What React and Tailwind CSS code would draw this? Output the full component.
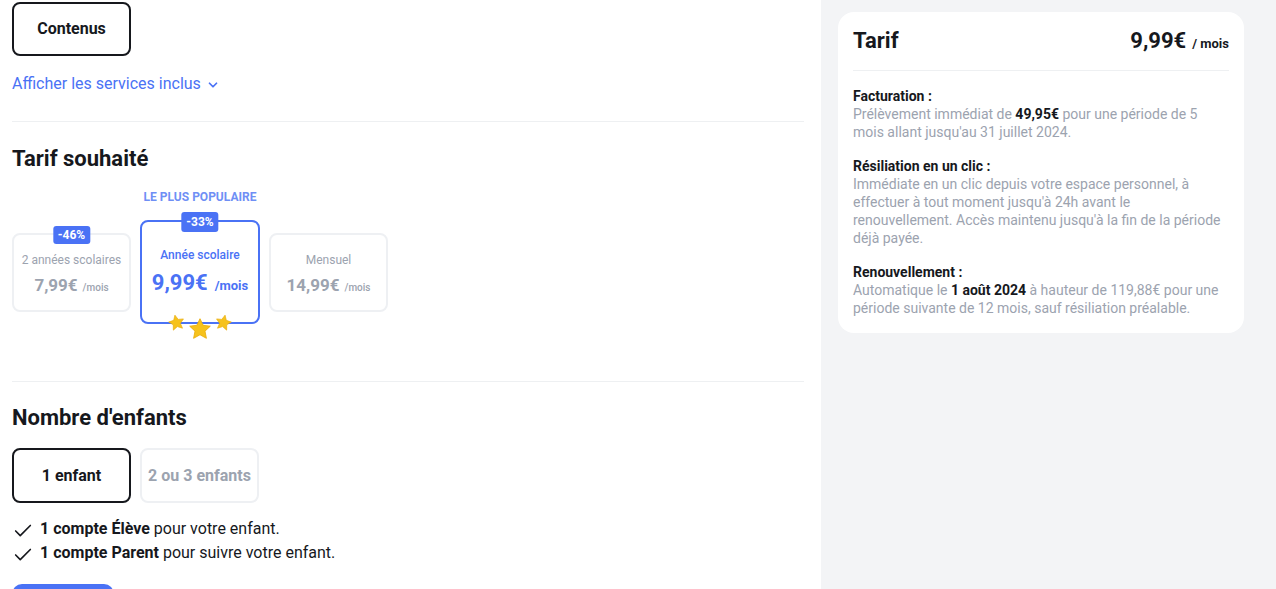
import { Check, ChevronDown } from 'lucide-react'

const Star = ({ className }) => (
  <svg viewBox="0 0 24 24" className={className}>
    <path
      d="M12 2.5l2.9 6.1 6.6.8-4.9 4.6 1.3 6.6L12 17.3l-5.9 3.3 1.3-6.6-4.9-4.6 6.6-.8z"
      fill="#f6c21c"
      stroke="#e9ad0c"
      strokeWidth="0.8"
      strokeLinejoin="round"
    />
  </svg>
)

function PlanCard({ badge, title, price }) {
  return (
    <div className="relative mb-[12px] flex h-[79px] w-[119px] flex-col items-center justify-center gap-[5px] rounded-lg border-2 border-[#eef0f3] bg-white pt-[6px]">
      {badge && (
        <span className="absolute -top-[9px] left-1/2 -translate-x-1/2 rounded-[3px] bg-[#4a72f5] px-[5px] text-[12px] font-bold leading-[18px] text-white">
          {badge}
        </span>
      )}
      <span className="text-[12px] leading-4 text-[#9ca3af]">{title}</span>
      <span className="flex items-baseline gap-[5px] leading-6 text-[#9ca3af]">
        <span className="text-[17px] font-bold">{price}</span>
        <span className="text-[10px] font-medium">/mois</span>
      </span>
    </div>
  )
}

export default function App() {
  return (
    <div className="flex min-h-[589px] w-full font-['Roboto',sans-serif] text-[#16181d]">
      {/* Left column */}
      <div className="w-[821px] shrink-0 bg-white pl-3 pr-[17px] pt-[2px]">
        <button className="h-[54px] w-[119px] rounded-lg border-2 border-[#16181d] text-[16px] font-bold">
          Contenus
        </button>

        <div className="mt-[16px] flex items-center gap-[5px] text-[16px] leading-6 text-[#4a72f5]">
          Afficher les services inclus
          <ChevronDown className="mt-[2px] h-[14px] w-[14px]" strokeWidth={3} />
        </div>

        <div className="mt-[25px] border-t border-[#eef0f2]" />

        <h2 className="mt-[23px] text-[22px] font-bold leading-7">Tarif souhaité</h2>

        {/* Plans */}
        <div className="mt-[16px] flex items-end gap-[9px]">
          <PlanCard badge="-46%" title="2 années scolaires" price="7,99€" />

          <div className="flex w-[120px] flex-col items-center">
            <span className="text-[12px] font-bold leading-4 text-[#6f8ff5]">LE PLUS POPULAIRE</span>
            <div className="relative mt-[15px] flex h-[104px] w-[120px] flex-col items-center justify-center gap-[6px] rounded-lg border-2 border-[#4a72f5] bg-white pt-[2px]">
              <span className="absolute -top-[10px] left-1/2 -translate-x-1/2 rounded-[3px] bg-[#4a72f5] px-[5px] text-[12px] font-bold leading-[20px] text-white">
                -33%
              </span>
              <span className="text-[12px] font-medium leading-4 text-[#4a72f5]">Année scolaire</span>
              <span className="flex items-baseline gap-[7px] leading-7 text-[#4a72f5]">
                <span className="text-[22px] font-bold">9,99€</span>
                <span className="text-[13px] font-bold">/mois</span>
              </span>
              <div className="absolute left-1/2 top-[91px] flex -translate-x-1/2 items-start gap-[1px]">
                <Star className="h-[19px] w-[19px] -rotate-12" />
                <Star className="mt-[3px] h-[26px] w-[26px]" />
                <Star className="h-[19px] w-[19px] rotate-12" />
              </div>
            </div>
          </div>

          <PlanCard title="Mensuel" price="14,99€" />
        </div>

        <div className="mt-[57px] border-t border-[#eef0f2]" />

        <h2 className="mt-[22px] text-[22px] font-bold leading-7">Nombre d'enfants</h2>

        <div className="mt-4 flex gap-[9px]">
          <button className="h-[55px] w-[119px] rounded-lg border-2 border-[#16181d] text-[16px] font-bold">
            1 enfant
          </button>
          <button className="h-[55px] w-[119px] rounded-lg border-2 border-[#eef0f3] text-[16px] font-bold text-[#9ca3af]">
            2 ou 3 enfants
          </button>
        </div>

        <ul className="mt-[14px] text-[16px] leading-6">
          <li className="flex items-center gap-[6px]">
            <Check className="h-[22px] w-[22px] translate-y-[2px]" strokeWidth={1.8} />
            <span>
              <b>1 compte Élève</b> pour votre enfant.
            </span>
          </li>
          <li className="flex items-center gap-[6px]">
            <Check className="h-[22px] w-[22px] translate-y-[2px]" strokeWidth={1.8} />
            <span>
              <b>1 compte Parent</b> pour suivre votre enfant.
            </span>
          </li>
        </ul>

        <button className="mt-[19px] h-[44px] w-[102px] rounded-[10px] bg-[#4a72f5]" />
      </div>

      {/* Right column */}
      <div className="flex-1 bg-[#f3f4f6] pl-[17px] pt-3">
        <div className="w-[406px] rounded-2xl bg-white px-[15px] pb-[16px] pt-[15px]">
          <div className="flex h-[44px] items-baseline justify-between border-b border-[#eef0f2] leading-7">
            <span className="text-[22px] font-bold">Tarif</span>
            <span className="flex items-baseline gap-[6px]">
              <span className="text-[22px] font-bold">9,99€</span>
              <span className="text-[13px] font-bold">/ mois</span>
            </span>
          </div>

          <div className="mt-4 text-[14px] leading-[18px] text-[#9ca3af]">
            <p className="font-bold text-[#16181d]">Facturation :</p>
            <p>
              Prélèvement immédiat de <b className="text-[#16181d]">49,95€</b> pour une période de 5 mois
              allant jusqu'au 31 juillet 2024.
            </p>

            <p className="mt-4 font-bold text-[#16181d]">Résiliation en un clic :</p>
            <p>
              Immédiate en un clic depuis votre espace personnel, à effectuer à tout moment jusqu'à 24h
              avant le renouvellement. Accès maintenu jusqu'à la fin de la période déjà payée.
            </p>

            <p className="mt-4 font-bold text-[#16181d]">Renouvellement :</p>
            <p>
              Automatique le <b className="text-[#16181d]">1 août 2024</b> à hauteur de 119,88€ pour une
              période suivante de 12 mois, sauf résiliation préalable.
            </p>
          </div>
        </div>
      </div>
    </div>
  )
}
